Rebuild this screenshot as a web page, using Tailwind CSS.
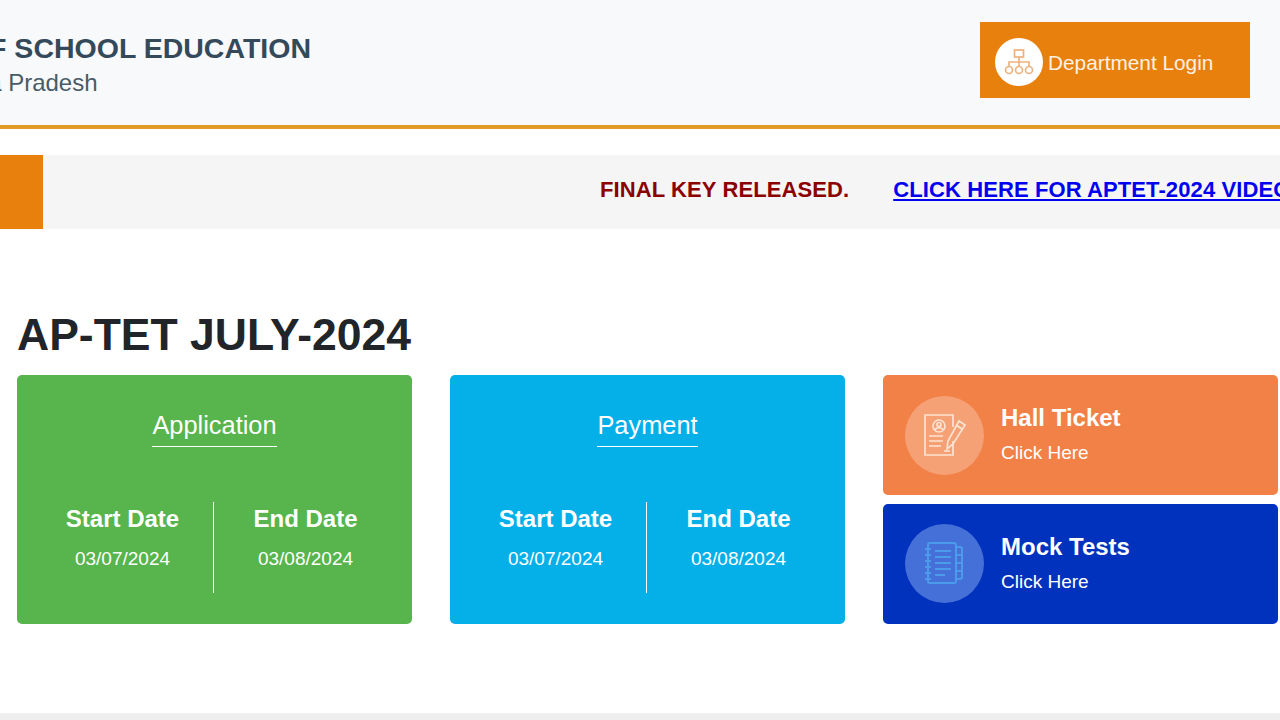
<!DOCTYPE html>
<html lang="en">
<head>
<meta charset="utf-8">
<title>AP-TET July 2024</title>
<script src="https://cdn.jsdelivr.net/npm/@tailwindcss/browser@4"></script>
</head>
<body class="bg-white font-['Liberation_Sans',Arial,sans-serif] w-[1280px] h-[720px] overflow-hidden relative">
    <!-- Cabecera -->
    <header class="h-[129px] bg-[#f8f9fb] border-b-4 border-[#e39b26] flex justify-between">
        <div class="w-[311px] overflow-hidden flex flex-col items-end pt-[31px]">
            <div class="whitespace-nowrap text-[28.5px] leading-[34px] font-bold text-[#34495a]">DEPARTMENT OF SCHOOL EDUCATION</div>
            <div class="w-[311px] flex">
                <div class="whitespace-nowrap text-[24px] leading-[35px] text-[#4a5b68] ml-[-240px]">Government of Andhra Pradesh</div>
            </div>
        </div>
        <div class="pt-[22px] pr-[30px]">
            <a class="w-[270px] h-[76px] bg-[#e8800e] flex items-center pl-[15px] pt-[4px] gap-[5px] text-white text-[20.8px]">
                <span class="w-[48px] h-[48px] rounded-full bg-white flex items-center justify-center">
                    <svg width="30" height="26" viewBox="0 0 30 26" fill="none" stroke="#eeb27e" stroke-width="1.7">
                        <rect x="10.5" y="1" width="9" height="7"/>
                        <path d="M15 8v10M5 18v-5h20v5"/>
                        <circle cx="5" cy="21" r="3.5"/>
                        <circle cx="15" cy="21" r="3.5"/>
                        <circle cx="25" cy="21" r="3.5"/>
                    </svg>
                </span>
                <span class="pt-[2px] text-[#fdf1e2]">Department Login</span>
            </a>
        </div>
    </header>

    <!-- Marquesina -->
    <div class="mt-[26px] h-[74px] bg-[#f5f5f5] flex items-center overflow-hidden">
        <div class="w-[43px] h-full bg-[#e8800e] shrink-0"></div>
        <div class="pl-[557px] pb-[6px] flex gap-[44px] whitespace-nowrap text-[22px] tracking-[0.1px] font-bold">
            <span class="text-[#8b0000]">FINAL KEY RELEASED.</span>
            <a class="text-[#0000ee] underline">CLICK HERE FOR APTET-2024 VIDEO</a>
        </div>
    </div>

    <!-- Contenido -->
    <main class="pl-[17px] pt-[80px]">
        <h1 class="text-[44.5px] leading-[52px] font-bold text-[#212529] mb-[14px]">AP-TET JULY-2024</h1>
        <div class="flex gap-[38px]">
            <!-- Tarjeta Application -->
            <div class="w-[395px] h-[249px] rounded-[5px] bg-[#58b44c] text-white pt-[35px]">
                <div class="text-center">
                    <span class="inline-block text-[25.4px] leading-[30px] pb-[6px] border-b border-white">Application</span>
                </div>
                <div class="flex mt-[55px] h-[91px] px-[15px]">
                    <div class="w-[181px] text-center pt-[2px]">
                        <div class="text-[24px] leading-[30px] font-bold">Start Date</div>
                        <div class="text-[19px] leading-[22px] mt-[14px]">03/07/2024</div>
                    </div>
                    <div class="flex-1 border-l border-white text-center pt-[2px]">
                        <div class="text-[24px] leading-[30px] font-bold">End Date</div>
                        <div class="text-[19px] leading-[22px] mt-[14px]">03/08/2024</div>
                    </div>
                </div>
            </div>

            <!-- Tarjeta Payment -->
            <div class="w-[395px] h-[249px] rounded-[5px] bg-[#05b0e9] text-white pt-[35px]">
                <div class="text-center">
                    <span class="inline-block text-[25.4px] leading-[30px] pb-[6px] border-b border-white">Payment</span>
                </div>
                <div class="flex mt-[55px] h-[91px] px-[15px]">
                    <div class="w-[181px] text-center pt-[2px]">
                        <div class="text-[24px] leading-[30px] font-bold">Start Date</div>
                        <div class="text-[19px] leading-[22px] mt-[14px]">03/07/2024</div>
                    </div>
                    <div class="flex-1 border-l border-white text-center pt-[2px]">
                        <div class="text-[24px] leading-[30px] font-bold">End Date</div>
                        <div class="text-[19px] leading-[22px] mt-[14px]">03/08/2024</div>
                    </div>
                </div>
            </div>

            <!-- Hall Ticket y Mock Tests -->
            <div class="w-[395px] h-[249px] flex flex-col gap-[9px]">
                <div class="h-[120px] rounded-[5px] bg-[#f28147] text-white flex items-center pl-[22px] gap-[17px]">
                    <span class="w-[79px] h-[79px] rounded-full bg-white/25 flex items-center justify-center">
                        <svg width="44" height="44" viewBox="0 0 44 44" fill="none" stroke="#fde3d2" stroke-width="1.7">
                            <path d="M30 28v14H2V2h28v12"/>
                            <circle cx="16" cy="13" r="6"/>
                            <circle cx="16" cy="11.5" r="2"/>
                            <path d="M12 17c1-3 7-3 8 0"/>
                            <path d="M6 23h14M6 28h14M6 33h12M21 38h6"/>
                            <path d="M36 8l6 4-12 19-6 5 1-8z"/>
                            <path d="M33 12l6 4"/>
                        </svg>
                    </span>
                    <div class="pb-[3px]">
                        <div class="text-[24px] leading-[30px] font-bold">Hall Ticket</div>
                        <div class="text-[19px] leading-[22px] mt-[9px]">Click Here</div>
                    </div>
                </div>
                <div class="h-[120px] rounded-[5px] bg-[#0032bd] text-white flex items-center pl-[22px] gap-[17px]">
                    <span class="w-[79px] h-[79px] mb-[2px] rounded-full bg-[#4570d8] flex items-center justify-center">
                        <svg width="42" height="44" viewBox="0 0 42 44" fill="none" stroke="#4c9bea" stroke-width="2">
                            <rect x="4" y="2" width="28" height="40" rx="2"/>
                            <path d="M1 8h6M1 14h6M1 20h6M1 26h6M1 32h6M1 38h6"/>
                            <path d="M11 10h16M11 16h16M11 22h16M11 28h16M11 34h10"/>
                            <path d="M32 6h4a2 2 0 0 1 2 2v28a2 2 0 0 1-2 2h-4M32 14h6M32 22h6M32 30h6"/>
                        </svg>
                    </span>
                    <div class="pb-[3px]">
                        <div class="text-[24px] leading-[30px] font-bold">Mock Tests</div>
                        <div class="text-[19px] leading-[22px] mt-[9px]">Click Here</div>
                    </div>
                </div>
            </div>
        </div>
    </main>

    <!-- Pie -->
    <div class="absolute left-0 right-0 bottom-0 h-[7px] bg-[#eeeeee]"></div>
</body>
</html>
